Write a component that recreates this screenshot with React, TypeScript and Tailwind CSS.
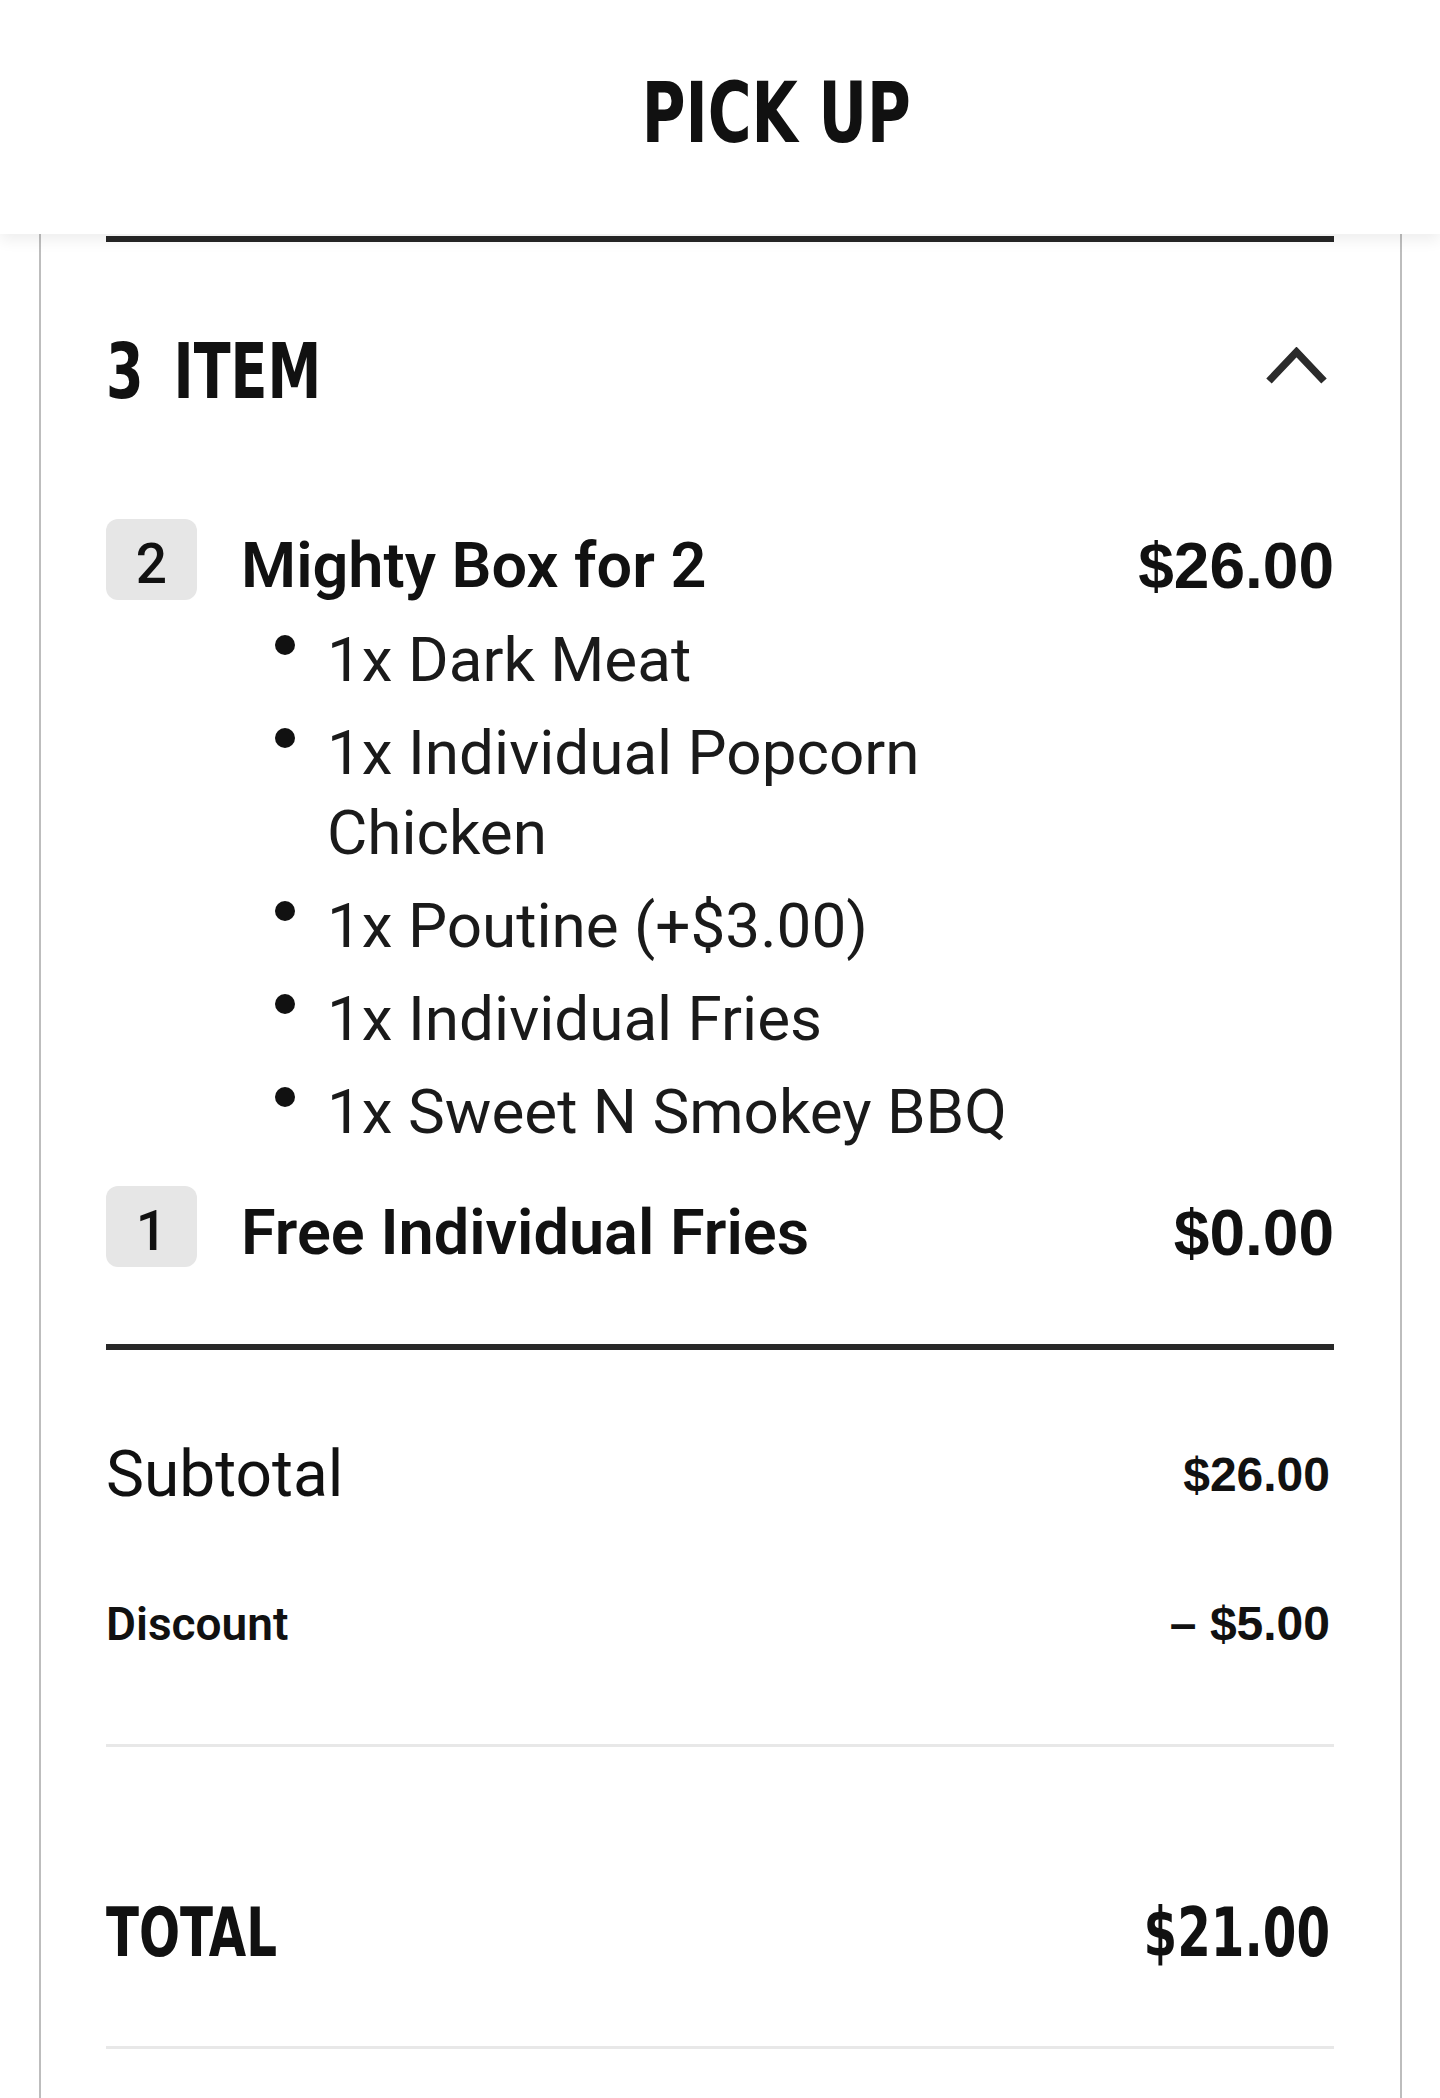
import React from 'react';

type LineItem = {
  qty: number;
  name: string;
  price: string;
  options: string[];
};

const items: LineItem[] = [
  {
    qty: 2,
    name: 'Mighty Box for 2',
    price: '$26.00',
    options: [
      '1x Dark Meat',
      '1x Individual Popcorn Chicken',
      '1x Poutine (+$3.00)',
      '1x Individual Fries',
      '1x Sweet N Smokey BBQ',
    ],
  },
  { qty: 1, name: 'Free Individual Fries', price: '$0.00', options: [] },
];

// no narrow face installed, so the condensed display type is squeezed horizontally
const condensed = "font-['Liberation_Sans_Narrow','DejaVu_Sans_Condensed',sans-serif] inline-block scale-x-[0.79]";
const body = "font-['Roboto','Liberation_Sans',sans-serif]";
const numeric = "font-['Liberation_Sans',Arial,sans-serif]";

const ChevronUp: React.FC = () => (
  <svg
    viewBox="0 0 63 38"
    className="w-[63px] h-[38px] mt-[13px] mr-[6px] shrink-0"
    fill="none"
    stroke="#2b2b2b"
    strokeWidth={7.5}
    strokeLinejoin="miter"
  >
    <polyline points="4,34 31.5,5 59,34" />
  </svg>
);

const ItemRow: React.FC<{ item: LineItem; first?: boolean }> = ({ item, first }) => (
  <div className={`flex items-start ${first ? 'mt-[109px]' : 'mt-[34px]'}`}>
    <div
      className={`${body} w-[91px] h-[81px] shrink-0 rounded-[12px] bg-[#e6e6e6] flex items-center justify-center pt-[8px] text-[55px] leading-[54px] font-medium`}
    >
      {item.qty}
    </div>
    <div className="flex-1 ml-[44px] mt-[7px]">
      <div className={`${body} text-[63px] leading-[80px] font-semibold`}>{item.name}</div>
      {item.options.length > 0 && (
        <ul className="mt-[14px] flex flex-col gap-[13px]">
          {item.options.map((opt) => (
            <li key={opt} className="flex items-start pl-[34px]">
              <span className="w-[20px] h-[20px] mt-[15px] shrink-0 rounded-full bg-[#111]" />
              <span className={`${body} ml-[32px] text-[62px] leading-[80px] text-[#1a1a1a]`}>{opt}</span>
            </li>
          ))}
        </ul>
      )}
    </div>
    <div className={`${numeric} w-[250px] shrink-0 mt-[7px] text-right text-[64px] leading-[80px] font-bold`}>
      {item.price}
    </div>
  </div>
);

const App: React.FC = () => {
  return (
    <div className="h-[2098px] overflow-hidden bg-white flex flex-col text-[#111]">
      <header className="relative z-10 h-[234px] shrink-0 bg-white flex items-center justify-center pl-[112px] pb-[8px] shadow-[0_6px_14px_rgba(0,0,0,0.07)]">
        <h1 className={`${condensed} origin-center text-[84px] leading-[84px] font-bold`}>PICK UP</h1>
      </header>

      <div className="ml-[39px] w-[1363px] flex-1 border-x-2 border-[#bdbdbd] pl-[65px] pr-[66px]">
        <div className="mt-[2px] h-[6px] bg-[#262626]" />

        <div className="pt-[92px] flex justify-between items-start">
          <h2 className={`${condensed} origin-left text-[76px] leading-[76px] font-bold`}>
            <span>3</span>
            <span className="ml-[38px]">ITEM</span>
          </h2>
          <ChevronUp />
        </div>

        {items.map((item, i) => (
          <ItemRow key={item.name} item={item} first={i === 0} />
        ))}

        <div className="mt-[71px] h-[6px] bg-[#282828]" />

        <div className="mt-[85px] flex justify-between items-start pr-[4px]">
          <span className={`${body} text-[64px] leading-[80px]`}>Subtotal</span>
          <span className={`${numeric} text-[48px] leading-[80px] font-bold`}>$26.00</span>
        </div>

        <div className="mt-[79px] flex justify-between items-start pr-[4px]">
          <span className={`${body} text-[46px] leading-[60px] font-semibold`}>Discount</span>
          <span className={`${numeric} text-[48px] leading-[60px] font-bold`}>– $5.00</span>
        </div>

        <div className="mt-[90px] h-[3px] bg-[#e8e8e8]" />

        <div className="mt-[152px] flex justify-between items-start pr-[4px]">
          <span className={`${condensed} origin-left text-[68px] leading-[68px] font-bold`}>TOTAL</span>
          <span className={`${condensed} origin-right text-[68px] leading-[68px] font-bold`}>$21.00</span>
        </div>

        <div className="mt-[79px] h-[3px] bg-[#e8e8e8]" />
      </div>
    </div>
  );
};

export default App;
